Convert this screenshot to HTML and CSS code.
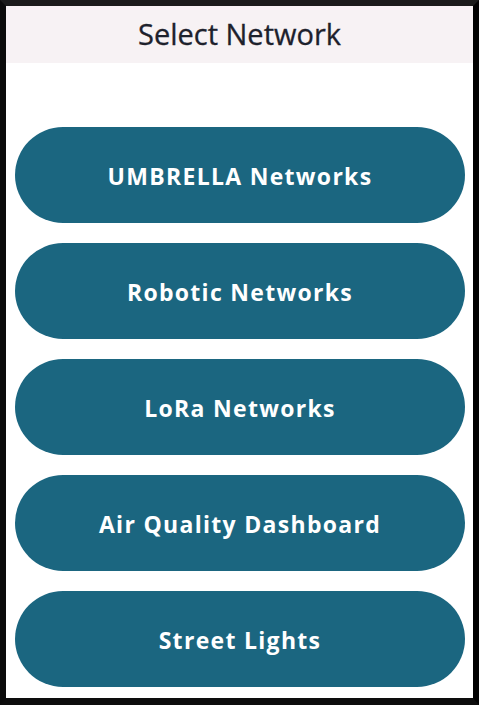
FILE: index.html
```html
<!DOCTYPE html>
<html lang="en">
<head>
<meta charset="utf-8">
<title>Select Network</title>
<link rel="stylesheet" href="styles.css">
</head>
<body>
<div class="frame">
  <header class="topbar"><h1 class="title">Select Network</h1></header>
  <main class="list">
    <button class="net-btn">UMBRELLA Networks</button>
    <button class="net-btn">Robotic Networks</button>
    <button class="net-btn">LoRa Networks</button>
    <button class="net-btn">Air Quality Dashboard</button>
    <button class="net-btn">Street Lights</button>
  </main>
</div>
</body>
</html>
```
FILE: styles.css
```css
* { box-sizing: border-box; }
html, body { margin: 0; padding: 0; }
body {
  width: 479px;
  height: 705px;
  background: #0a0a0a;
  font-family: "Open Sans", "Noto Sans", sans-serif;
}
.frame {
  width: 479px;
  height: 705px;
  border-style: solid;
  border-width: 6px 6px 7px 6px;
  border-color: #1b1b1b #020202 #0d0d0d #0b0b0b;
  background: #ffffff;
  display: flex;
  flex-direction: column;
}
.topbar {
  height: 57px;
  background: #f7f2f4;
  display: flex;
  align-items: center;
  justify-content: center;
  padding-bottom: 3px;
}
.title {
  margin: 0;
  font-size: 29px;
  line-height: 1;
  font-weight: 400;
  color: #1d212c;
  -webkit-text-stroke: 0.3px #1d212c;
}
.list {
  display: flex;
  flex-direction: column;
  gap: 20px;
  padding: 64px 8px 0 9px;
}
.net-btn {
  height: 96px;
  border: none;
  border-radius: 48px;
  background: #1b6680;
  color: #ffffff;
  font-family: "Open Sans", "Noto Sans", sans-serif;
  font-size: 23px;
  font-weight: 700;
  letter-spacing: 1.3px;
  padding: 2px 0 0 0;
}
```
